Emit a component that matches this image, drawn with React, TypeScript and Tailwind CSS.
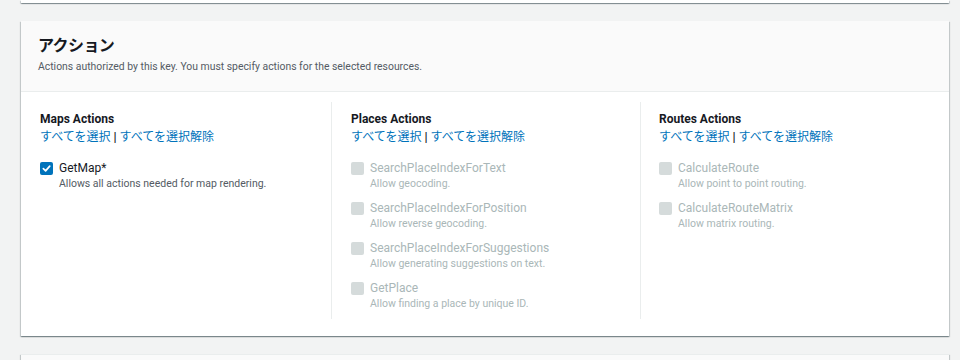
const font = { fontFamily: 'Roboto, "Noto Sans CJK JP", sans-serif' }

type Action = { name: string; desc: string; checked?: boolean; disabled?: boolean }

const groups: { title: string; actions: Action[] }[] = [
  {
    title: "Maps Actions",
    actions: [{ name: "GetMap*", desc: "Allows all actions needed for map rendering.", checked: true }],
  },
  {
    title: "Places Actions",
    actions: [
      { name: "SearchPlaceIndexForText", desc: "Allow geocoding.", disabled: true },
      { name: "SearchPlaceIndexForPosition", desc: "Allow reverse geocoding.", disabled: true },
      { name: "SearchPlaceIndexForSuggestions", desc: "Allow generating suggestions on text.", disabled: true },
      { name: "GetPlace", desc: "Allow finding a place by unique ID.", disabled: true },
    ],
  },
  {
    title: "Routes Actions",
    actions: [
      { name: "CalculateRoute", desc: "Allow point to point routing.", disabled: true },
      { name: "CalculateRouteMatrix", desc: "Allow matrix routing.", disabled: true },
    ],
  },
]

const Checkbox = ({ checked, disabled }: { checked?: boolean; disabled?: boolean }) => {
  if (checked) {
    return (
      <span className="mt-[3px] flex h-[13px] w-[13px] shrink-0 items-center justify-center rounded-[2px] bg-[#0073bb]">
        <svg width="9" height="9" viewBox="0 0 10 10" fill="none">
          <path d="M1.5 5.2 L4 7.6 L8.6 2.4" stroke="white" strokeWidth="1.9" strokeLinecap="round" strokeLinejoin="round" />
        </svg>
      </span>
    )
  }
  return (
    <span className={`mt-[3px] h-[13px] w-[13px] shrink-0 rounded-[2px] ${disabled ? "bg-[#d5dbdb]" : "border border-[#aab7b8] bg-white"}`} />
  )
}

const Column = ({ title, actions, className }: { title: string; actions: Action[]; className: string }) => (
  <div className={className}>
    <div className="pt-[8px] text-[12px] font-bold leading-[18px] text-[#16191f]">{title}</div>
    <div className="text-[12px] leading-[18px] text-[#0073bb]">
      <span>すべてを選択</span>
      <span className="mx-[3px] font-bold text-[#16191f]">|</span>
      <span>すべてを選択解除</span>
    </div>
    <div className="mt-[13px] flex flex-col gap-[8px]">
      {actions.map((a) => (
        <div key={a.name} className="flex gap-[6px]">
          <Checkbox checked={a.checked} disabled={a.disabled} />
          <div>
            <div className={`text-[12px] leading-[18px] ${a.disabled ? "text-[#aab7b8]" : "text-[#16191f]"}`}>{a.name}</div>
            <div className={`text-[10.5px] leading-[14px] ${a.disabled ? "text-[#aab7b8]" : "text-[#545b64]"}`}>{a.desc}</div>
          </div>
        </div>
      ))}
    </div>
  </div>
)

const App = () => {
  const shadow = "shadow-[0_1px_1px_0_rgba(0,28,36,0.3),1px_1px_1px_0_rgba(0,28,36,0.15),-1px_1px_1px_0_rgba(0,28,36,0.15)]"
  return (
    <div style={font} className="h-[360px] w-[960px] overflow-hidden bg-[#f2f3f3]">
      <div className={`ml-[21px] h-[3px] w-[928px] bg-white ${shadow}`} />

      <div className={`ml-[21px] mt-[18px] w-[928px] bg-white ${shadow}`}>
        <div className="border-b border-[#eaeded] bg-[#fafafa] px-[17px] pb-[16px] pt-[13px]">
          <h2 className="text-[16px] font-bold leading-[24px] tracking-[-0.6px] text-[#16191f]">アクション</h2>
          <p className="mt-[1px] text-[10.4px] leading-[16px] text-[#545b64]">
            Actions authorized by this key. You must specify actions for the selected resources.
          </p>
        </div>
        <div className="flex px-[19px] pb-[17px] pt-[10px]">
          <Column title={groups[0].title} actions={groups[0].actions} className="w-[291px] pb-[8px]" />
          <Column title={groups[1].title} actions={groups[1].actions} className="w-[309px] border-l border-[#eaeded] pb-[8px] pl-[19px]" />
          <Column title={groups[2].title} actions={groups[2].actions} className="flex-1 border-l border-[#eaeded] pb-[8px] pl-[18px]" />
        </div>
      </div>

      <div className={`ml-[21px] mt-[18px] h-[40px] w-[928px] border-t border-[#eaeded] bg-[#fafafa] ${shadow}`} />
    </div>
  )
}

export default App
